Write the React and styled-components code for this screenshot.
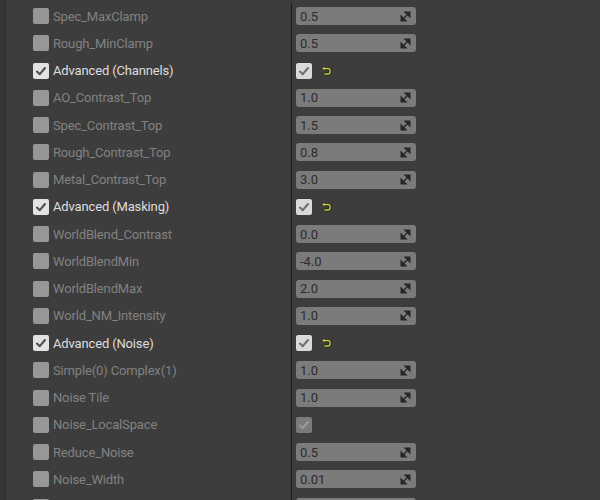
import React from "react";
import styled, { createGlobalStyle } from "styled-components";

const Global = createGlobalStyle`
  html, body { margin: 0; padding: 0; background: #3d3d3d; }
  body { width: 600px; height: 500px; overflow: hidden; font-family: Roboto, "Liberation Sans", sans-serif; }
`;

const Panel = styled.div`
  display: flex;
  width: 600px;
  height: 500px;
  overflow: hidden;
  background: #3d3d3d;
`;

const Gutter = styled.div`
  width: 5px;
  flex: none;
  background: #363636;
  border-right: 1px solid #2e2e2e;
`;

const List = styled.div`
  flex: 1;
  padding-top: 2.5px;
  display: flex;
  flex-direction: column;
`;

const Row = styled.div`
  display: grid;
  grid-template-columns: 285px 1px 1fr;
  height: 27.25px;
  flex: none;
`;

const NameCell = styled.div`
  display: flex;
  align-items: center;
  padding-left: 27px;
  gap: 4px;
`;

const Divider = styled.div`
  background: #1c1c1c;
`;

const ValueCell = styled.div`
  display: flex;
  align-items: center;
  padding-left: 4px;
  gap: 9px;
`;

const Box = styled.div`
  width: 16px;
  height: 16px;
  border-radius: 2px;
  flex: none;
  display: flex;
  align-items: center;
  justify-content: center;
  background: ${(p) => p.$bg};
`;

const Label = styled.span`
  font-size: 13px;
  letter-spacing: -0.15px;
  color: ${(p) => (p.$on ? "#dedede" : "#828282")};
  white-space: nowrap;
`;

const Field = styled.div`
  width: 120px;
  height: 18px;
  box-sizing: border-box;
  border-radius: 3px;
  background: #7b7b7b;
  display: flex;
  align-items: center;
  justify-content: space-between;
  padding: 0 5px 0 4px;
`;

const FieldText = styled.span`
  font-size: 13px;
  color: #2c2c2c;
`;

const Check = ({ color }) => (
  <svg width="12" height="12" viewBox="0 0 12 12">
    <path d="M2 6.5 L4.8 9.2 L10 3" fill="none" stroke={color} strokeWidth="2" strokeLinecap="round" strokeLinejoin="round" />
  </svg>
);

const CheckBox = ({ checked, bg, mark }) => (
  <Box $bg={bg}>{checked && <Check color={mark} />}</Box>
);

const SpinIcon = () => (
  <svg width="11" height="11" viewBox="0 0 11 11">
    <polygon points="3.5,0.5 10.5,0.5 10.5,7.5" fill="#262626" />
    <polygon points="0.5,3.5 0.5,10.5 7.5,10.5" fill="#262626" />
    <line x1="2" y1="9" x2="9" y2="2" stroke="#262626" strokeWidth="1.3" />
  </svg>
);

const ResetIcon = () => (
  <svg width="11" height="10" viewBox="0 0 11 10">
    <path d="M2.5 2.5 L7 2.5 Q9 2.5 9 4.5 L9 6 Q9 8 7 8 L3.5 8" fill="none" stroke="#1e1e10" strokeWidth="3" />
    <polygon points="0.5,2.5 3.8,0 3.8,5" fill="#1e1e10" />
    <path d="M2.5 2.5 L7 2.5 Q9 2.5 9 4.5 L9 6 Q9 8 7 8 L3.5 8" fill="none" stroke="#cfd04a" strokeWidth="1.4" />
    <polygon points="1.2,2.5 3.5,0.8 3.5,4.2" fill="#cfd04a" />
  </svg>
);

const rows = [
  { name: "Spec_MaxClamp", value: "0.5" },
  { name: "Rough_MinClamp", value: "0.5" },
  { name: "Advanced (Channels)", group: true },
  { name: "AO_Contrast_Top", value: "1.0" },
  { name: "Spec_Contrast_Top", value: "1.5" },
  { name: "Rough_Contrast_Top", value: "0.8" },
  { name: "Metal_Contrast_Top", value: "3.0" },
  { name: "Advanced (Masking)", group: true },
  { name: "WorldBlend_Contrast", value: "0.0" },
  { name: "WorldBlendMin", value: "-4.0" },
  { name: "WorldBlendMax", value: "2.0" },
  { name: "World_NM_Intensity", value: "1.0" },
  { name: "Advanced (Noise)", group: true },
  { name: "Simple(0) Complex(1)", value: "1.0" },
  { name: "Noise Tile", value: "1.0" },
  { name: "Noise_LocalSpace", bool: true },
  { name: "Reduce_Noise", value: "0.5" },
  { name: "Noise_Width", value: "0.01" },
  { name: "", value: "" },
];

export default function App() {
  return (
    <>
      <Global />
      <Panel>
        <Gutter />
        <List>
          {rows.map((r, i) => (
            <Row key={i}>
              <NameCell>
                <CheckBox checked={r.group} bg={r.group ? "#e2e2e2" : "#979797"} mark="#4a4a4a" />
                {r.name && <Label $on={r.group}>{r.name}</Label>}
              </NameCell>
              <Divider />
              <ValueCell>
                {r.group ? (
                  <>
                    <CheckBox checked bg="#d9d9d9" mark="#6c6c6c" />
                    <ResetIcon />
                  </>
                ) : r.bool ? (
                  <CheckBox checked bg="#7a7a7a" mark="#9c9c9c" />
                ) : (
                  <Field>
                    {r.value && <FieldText>{r.value}</FieldText>}
                    {r.value && <SpinIcon />}
                  </Field>
                )}
              </ValueCell>
            </Row>
          ))}
        </List>
      </Panel>
    </>
  );
}
